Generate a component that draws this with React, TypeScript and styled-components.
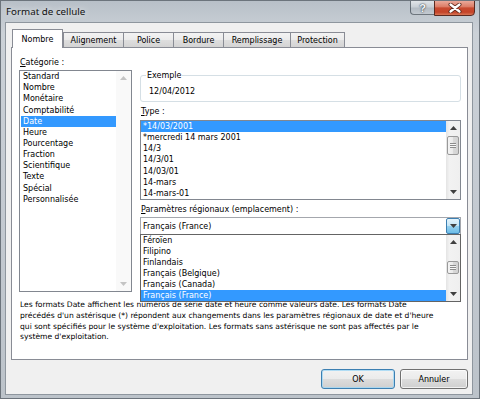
import React from 'react';
import styled, {createGlobalStyle} from 'styled-components';

const GlobalStyle = createGlobalStyle`
  html, body {
    margin: 0;
    padding: 0;
    background: #9ea6ae;
  }
`;

const tabs = [
    {label: 'Nombre', width: 51},
    {label: 'Alignement', width: 61},
    {label: 'Police', width: 51},
    {label: 'Bordure', width: 51},
    {label: 'Remplissage', width: 68},
    {label: 'Protection', width: 55},
];

const categories = ['Standard', 'Nombre', 'Monétaire', 'Comptabilité', 'Date', 'Heure', 'Pourcentage',
    'Fraction', 'Scientifique', 'Texte', 'Spécial', 'Personnalisée'];

const types = ['*14/03/2001', '*mercredi 14 mars 2001', '14/3', '14/3/01', '14/03/01', '14-mars', '14-mars-01'];

const locales = ['Féroïen', 'Filipino', 'Finlandais', 'Français (Belgique)', 'Français (Canada)', 'Français (France)'];

function Arrow({down, disabled}: { down?: boolean, disabled?: boolean }) {
    return (
        <svg width="7" height="4" viewBox="0 0 7 4">
            <polygon points={down ? '0,0 7,0 3.5,4' : '0,4 7,4 3.5,0'} fill={disabled ? '#c4c4c4' : '#404040'}/>
        </svg>
    );
}

function ScrollBar({thumbTop, thumbSize, disabled, width = 14}: {
    thumbTop?: number, thumbSize?: number, disabled?: boolean, width?: number
}) {
    return (
        <Bar $w={width} $disabled={disabled}>
            <BarButton><Arrow disabled={disabled}/></BarButton>
            <Track>
                {!disabled && thumbSize &&
                    <Thumb style={{marginTop: thumbTop, height: thumbSize}}><Grip/></Thumb>}
            </Track>
            <BarButton><Arrow down disabled={disabled}/></BarButton>
        </Bar>
    );
}

export default function App() {
    return (
        <>
            <GlobalStyle/>
            <Window>
                <TitleBar>
                    <Title>Format de cellule</Title>
                    <Captions>
                        <HelpButton>?</HelpButton>
                        <CloseButton>
                            <svg width="14" height="10" viewBox="0 0 14 10">
                                <path d="M2.5 1.5 L11.5 8.5 M11.5 1.5 L2.5 8.5" stroke="#5a2418" strokeWidth="4" strokeLinecap="round"/>
                                <path d="M2.5 1.5 L11.5 8.5 M11.5 1.5 L2.5 8.5" stroke="#ffffff" strokeWidth="2.3" strokeLinecap="round"/>
                            </svg>
                        </CloseButton>
                    </Captions>
                </TitleBar>

                <Client>
                    <TabRow>
                        {tabs.map((tab, index) =>
                            <Tab key={index} $active={index === 0} $w={tab.width}
                                 $overlap={index > 1}>{tab.label}</Tab>
                        )}
                    </TabRow>

                    <Panel>
                        <Columns>
                            <Column>
                                <FieldLabel $mb={2}><u>C</u>atégorie :</FieldLabel>
                                <ListBox $h={222}>
                                    <Items $pl={3}>
                                        {categories.map((c, index) =>
                                            <Item key={index} $selected={c === 'Date'}>{c}</Item>
                                        )}
                                    </Items>
                                    <ScrollBar disabled width={15}/>
                                </ListBox>
                            </Column>

                            <Column $mt={13}>
                                <Group>
                                    <Legend>Exemple</Legend>
                                    <Sample>12/04/2012</Sample>
                                </Group>

                                <FieldLabel $mt={4} $mb={3}><u>T</u>ype :</FieldLabel>
                                <ListBox $h={80}>
                                    <Items>
                                        {types.map((t, index) =>
                                            <Item key={index} $selected={index === 0}>{t}</Item>
                                        )}
                                    </Items>
                                    <ScrollBar thumbTop={1} thumbSize={19}/>
                                </ListBox>

                                <FieldLabel $mt={3.5} $mb={2.3}><u>P</u>aramètres régionaux (emplacement) :</FieldLabel>
                                <Combo>
                                    <ComboText>Français (France)</ComboText>
                                    <DropButton><Arrow down/></DropButton>
                                    <DropList>
                                        <Items>
                                            {locales.map((l, index) =>
                                                <Item key={index} $h={11}
                                                      $selected={index === locales.length - 1}>{l}</Item>
                                            )}
                                        </Items>
                                        <ScrollBar thumbTop={12} thumbSize={13}/>
                                    </DropList>
                                </Combo>
                            </Column>
                        </Columns>

                        <Description>
                            Les formats Date affichent les numéros de série date et heure comme valeurs date. Les formats Date<br/>
                            précédés d'un astérisque (*) répondent aux changements dans les paramètres régionaux de date et d'heure<br/>
                            qui sont spécifiés pour le système d'exploitation. Les formats sans astérisque ne sont pas affectés par le<br/>
                            système d'exploitation.
                        </Description>
                    </Panel>

                    <Buttons>
                        <Button $default $w={74}>OK</Button>
                        <Button $w={68}>Annuler</Button>
                    </Buttons>
                </Client>
            </Window>
        </>
    );
}

const Window = styled.div`
  width: 480px;
  height: 399px;
  box-sizing: border-box;
  display: flex;
  flex-direction: column;
  border: 1px solid #6c747c;
  background: linear-gradient(180deg, #b8c0c8 0%, #cbd1d7 8%, #c6ccd3 40%, #bcc3ca 100%);
  font-family: "DejaVu Sans", "Liberation Sans", sans-serif;
  font-size: 8px;
  color: #000;
  overflow: hidden;
`;

const TitleBar = styled.div`
  height: 21px;
  flex: 0 0 21px;
  display: flex;
  justify-content: space-between;
  align-items: flex-start;
  padding-left: 5px;
  padding-right: 4px;
`;

const Title = styled.div`
  font-family: "Noto Sans", "Open Sans", sans-serif;
  font-size: 9.8px;
  line-height: 21px;
  color: #111;
  text-shadow: 0 0 6px rgba(255, 255, 255, 0.9);
`;

const Captions = styled.div`
  display: flex;
  margin-top: -1px;
`;

const HelpButton = styled.div`
  width: 24px;
  height: 15px;
  box-sizing: border-box;
  border: 1px solid rgba(50, 60, 70, 0.65);
  border-right: none;
  border-radius: 0 0 0 4px;
  background: linear-gradient(180deg, #e0e4e8 0%, #c9d0d6 45%, #b3bbc3 55%, #c3cad1 100%);
  display: flex;
  justify-content: center;
  align-items: center;
  font-family: "Liberation Sans", sans-serif;
  font-weight: bold;
  font-size: 11px;
  color: #f4f6f8;
  text-shadow: 0 0 2px #39424c, 0 0 1px #39424c;
`;

const CloseButton = styled.div`
  width: 41px;
  height: 16px;
  box-sizing: border-box;
  border: 1px solid #5b2a20;
  border-radius: 0 0 4px 0;
  background: linear-gradient(180deg, #eaa99a 0%, #dc7e68 40%, #c84a30 50%, #c44429 80%, #d87656 100%);
  display: flex;
  justify-content: center;
  align-items: center;
`;

const Client = styled.div`
  flex: 1;
  margin: 0 6px 3px 4px;
  box-sizing: border-box;
  border: 1px solid #8e969e;
  background: #f0f0f0;
  padding: 6px 4px 0 5px;
  display: flex;
  flex-direction: column;
`;

const TabRow = styled.div`
  display: flex;
  align-items: flex-end;
  height: 19px;
  padding-left: 1px;
  margin-bottom: -1px;
  position: relative;
  z-index: 1;
`;

const Tab = styled.div<{ $active?: boolean, $w: number, $overlap?: boolean }>`
  width: ${p => p.$w}px;
  box-sizing: border-box;
  border: 1px solid #898c95;
  border-bottom: none;
  text-align: center;
  line-height: 11px;
  white-space: nowrap;
  margin-left: ${p => p.$overlap ? -1 : 0}px;
  height: ${p => p.$active ? 19 : 15}px;
  padding-top: ${p => p.$active ? 4 : 2}px;
  margin-bottom: ${p => p.$active ? 0 : 1}px;
  background: ${p => p.$active
    ? '#ffffff'
    : 'linear-gradient(180deg, #f3f3f3 0%, #ebebeb 50%, #dedede 51%, #d4d4d4 100%)'};
`;

const Panel = styled.div`
  flex: 0 0 313px;
  height: 313px;
  box-sizing: border-box;
  border: 1px solid #898c95;
  background: #fff;
  padding: 9px 6px 0 7px;
  position: relative;
`;

const Columns = styled.div`
  display: grid;
  grid-template-columns: 113px 321px;
  column-gap: 8px;
  align-items: start;
`;

const Column = styled.div<{ $mt?: number }>`
  display: flex;
  flex-direction: column;
  margin-top: ${p => p.$mt || 0}px;
`;

const FieldLabel = styled.div<{ $mt?: number, $mb?: number }>`
  line-height: 11.2px;
  margin-top: ${p => p.$mt || 0}px;
  margin-bottom: ${p => p.$mb || 0}px;
  padding-left: 1px;
  white-space: nowrap;
`;

const ListBox = styled.div<{ $h: number }>`
  height: ${p => p.$h}px;
  box-sizing: border-box;
  border: 1px solid #828790;
  background: #fff;
  display: flex;
`;

const Items = styled.div<{ $pl?: number }>`
  flex: 1;
  min-width: 0;
  overflow: hidden;
  padding-left: ${p => p.$pl === undefined ? 0 : p.$pl - 2}px;
`;

const Item = styled.div<{ $selected?: boolean, $h?: number }>`
  line-height: ${p => p.$h || 11.15}px;
  height: ${p => p.$h || 11.15}px;
  padding-left: 2px;
  white-space: nowrap;
  background: ${p => p.$selected ? '#3399ff' : 'transparent'};
  color: ${p => p.$selected ? '#fff' : '#000'};
`;

const Bar = styled.div<{ $w: number, $disabled?: boolean }>`
  flex: 0 0 ${p => p.$w}px;
  display: flex;
  flex-direction: column;
  background: ${p => p.$disabled
    ? '#f9f9f9'
    : 'linear-gradient(90deg, #e4e4e4 0%, #f2f2f2 25%, #efefef 100%)'};
`;

const BarButton = styled.div`
  height: 14px;
  flex: 0 0 14px;
  display: flex;
  justify-content: center;
  align-items: center;
`;

const Track = styled.div`
  flex: 1;
  display: flex;
  flex-direction: column;
  align-items: stretch;
`;

const Thumb = styled.div`
  margin-left: 1px;
  margin-right: 1px;
  box-sizing: border-box;
  border: 1px solid #999;
  border-radius: 2px;
  background: linear-gradient(90deg, #f4f4f4 0%, #e9e9e9 50%, #d9d9d9 51%, #d2d2d2 100%);
  display: flex;
  justify-content: center;
  align-items: center;
`;

const Grip = styled.div`
  width: 6px;
  height: 5px;
  background: repeating-linear-gradient(180deg, #8c8c8c 0px, #8c8c8c 1px, #f6f6f6 1px, #f6f6f6 2px);
`;

const Group = styled.fieldset`
  margin: 0;
  padding: 5px 8px 3.4px 8px;
  border: 1px solid #d5dfe5;
  border-radius: 3px;
  min-width: 0;
`;

const Legend = styled.legend`
  padding: 0 1px;
  margin-left: -3px;
  line-height: 11.2px;
`;

const Sample = styled.div`
  line-height: 11.2px;
`;

const Combo = styled.div`
  position: relative;
  height: 18px;
  box-sizing: border-box;
  border: 1px solid #a4a7ad;
  background: #fff;
  display: flex;
  align-items: center;
`;

const ComboText = styled.div`
  flex: 1;
  padding-left: 2px;
  line-height: 11px;
`;

const DropButton = styled.div`
  width: 14px;
  height: 16px;
  box-sizing: border-box;
  border: 1px solid #3c7fb1;
  border-radius: 2px;
  background: linear-gradient(180deg, #e5f4fc 0%, #c4e5f6 50%, #98d1ef 51%, #6cbde8 100%);
  display: flex;
  justify-content: center;
  align-items: center;
`;

const DropList = styled.div`
  position: absolute;
  top: 100%;
  left: -1px;
  right: -1px;
  height: 68px;
  box-sizing: border-box;
  border: 1px solid #646464;
  background: #fff;
  display: flex;
  z-index: 2;
`;

const Description = styled.div`
  margin-top: 7.5px;
  padding-left: 1px;
  font-size: 7.6px;
  line-height: 10.9px;
  white-space: nowrap;
`;

const Buttons = styled.div`
  display: flex;
  justify-content: flex-end;
  gap: 5px;
  margin-top: 9px;
`;

const Button = styled.div<{ $default?: boolean, $w: number }>`
  width: ${p => p.$w}px;
  height: 20px;
  box-sizing: border-box;
  border: 1px solid ${p => p.$default ? '#3c7fb1' : '#707070'};
  border-radius: 3px;
  background: linear-gradient(180deg, #f2f2f2 0%, #ebebeb 49%, #dddddd 50%, #cfcfcf 100%);
  box-shadow: inset 0 0 0 1px ${p => p.$default ? 'rgba(160, 215, 245, 0.8)' : 'rgba(255, 255, 255, 0.7)'};
  display: flex;
  justify-content: center;
  align-items: center;
`;
